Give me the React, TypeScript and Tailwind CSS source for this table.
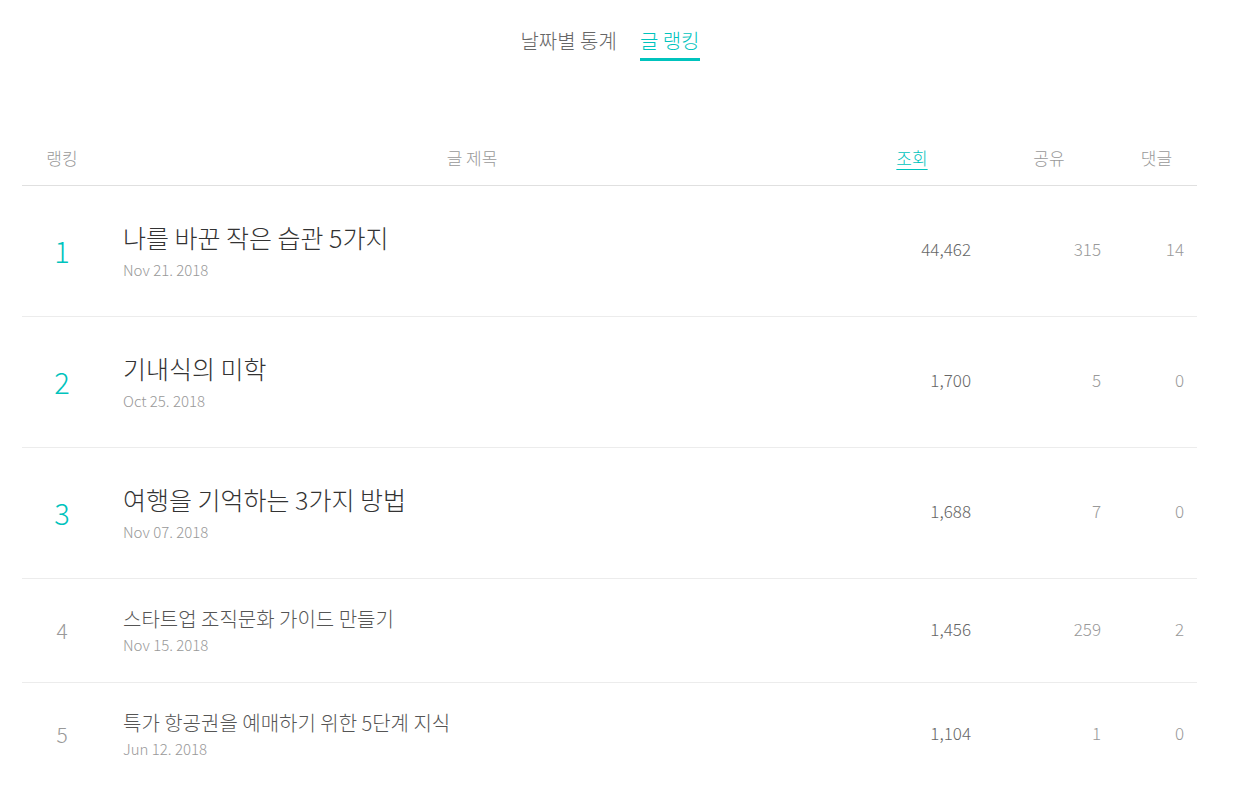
import React from "react";

const font = { fontFamily: '"Noto Sans CJK KR", "Noto Sans", sans-serif' };

type Row = { rank: number; title: string; date: string; views: string; shares: string; comments: string; big: boolean };

const rows: Row[] = [
  { rank: 1, title: "나를 바꾼 작은 습관 5가지", date: "Nov 21. 2018", views: "44,462", shares: "315", comments: "14", big: true },
  { rank: 2, title: "기내식의 미학", date: "Oct 25. 2018", views: "1,700", shares: "5", comments: "0", big: true },
  { rank: 3, title: "여행을 기억하는 3가지 방법", date: "Nov 07. 2018", views: "1,688", shares: "7", comments: "0", big: true },
  { rank: 4, title: "스타트업 조직문화 가이드 만들기", date: "Nov 15. 2018", views: "1,456", shares: "259", comments: "2", big: false },
  { rank: 5, title: "특가 항공권을 예매하기 위한 5단계 지식", date: "Jun 12. 2018", views: "1,104", shares: "1", comments: "0", big: false },
];

export default function App() {
  return (
    <div className="w-[1252px] h-[786px] bg-white overflow-hidden font-light" style={font}>
      <div className="flex justify-center items-start gap-[23px] pt-[26px] pr-[32px]">
        <div className="text-[20px] leading-[30px] text-[#666]">날짜별 통계</div>
        <div className="text-[20px] leading-[30px] text-[#00c3bd] pb-[2px] border-b-[3px] border-[#00c3bd]">글 랭킹</div>
      </div>
      <div className="ml-[22px] w-[1175px] mt-[75px]">
        <div className="flex items-center h-[50px] pb-[6px] border-b border-[#e0e0e0] text-[17px] text-[#999]">
          <div className="w-[80px] text-center">랭킹</div>
          <div className="w-[740px] text-center">글 제목</div>
          <div className="w-[140px] text-center text-[#00c3bd] underline underline-offset-[4px]">조회</div>
          <div className="w-[134px] text-center">공유</div>
          <div className="w-[81px] text-center">댓글</div>
        </div>
        {rows.map((r, i) => (
          <div
            key={r.rank}
            className={`flex items-center ${r.big ? "h-[131px]" : "h-[104px]"} ${i < rows.length - 1 ? "border-b border-[#ececec]" : ""}`}
          >
            <div
              className={`w-[80px] text-center ${r.big ? "text-[29px] text-[#00c3bd]" : "text-[21px] text-[#999]"}`}
            >
              {r.rank}
            </div>
            <div className="w-[740px] pl-[21px]">
              <div className={r.big ? "text-[25px] leading-[32px] text-[#333]" : "text-[20px] leading-[26px] text-[#555]"}>
                {r.title}
              </div>
              <div className={`text-[15px] text-[#999] ${r.big ? "mt-[6px]" : "mt-[2px]"} leading-[22px]`}>{r.date}</div>
            </div>
            <div className="w-[140px] text-right pr-[11px] pb-[4px] text-[17px] text-[#666]">{r.views}</div>
            <div className="w-[134px] text-right pr-[15px] pb-[4px] text-[17px] text-[#999]">{r.shares}</div>
            <div className="w-[81px] text-right pr-[13px] pb-[4px] text-[17px] text-[#999]">{r.comments}</div>
          </div>
        ))}
      </div>
    </div>
  );
}
